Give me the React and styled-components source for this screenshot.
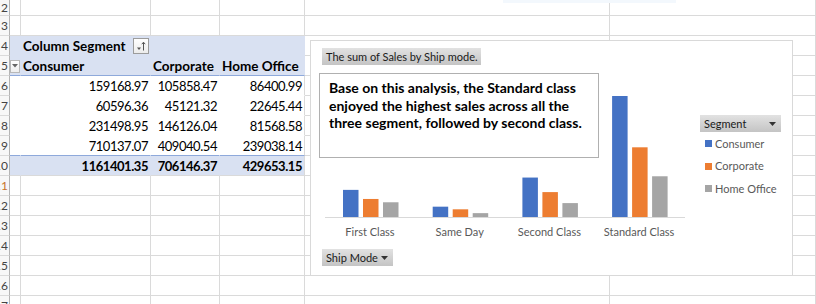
import React from 'react';
import styled, { createGlobalStyle } from 'styled-components';

const Global = createGlobalStyle`
  html, body { margin: 0; padding: 0; background: #fff; }
  body { font-family: Lato, "Liberation Sans", sans-serif; }
`;

const COLS = '10px 11px 130px 69px 85px 305px 1fr';
const GRID = '#dadada';
const PIVOT_BG = '#d9e1f2';
const PIVOT_LINE = '#8ea9db';

const Page = styled.div`
  position: relative;
  width: 816px;
  height: 304px;
  overflow: hidden;
  background: #fff;
`;

const Sheet = styled.div`
  display: flex;
  flex-direction: column;
`;

const Row = styled.div`
  display: grid;
  grid-template-columns: ${COLS};
  height: ${p => p.$h}px;
`;

const Cell = styled.div`
  box-sizing: border-box;
  border-right: 1px solid ${p => p.$vline || GRID};
  border-bottom: 1px solid ${p => p.$hline || GRID};
  background: ${p => p.$bg || '#fff'};
  display: flex;
  align-items: center;
  justify-content: ${p => (p.$right ? 'flex-end' : p.$between ? 'space-between' : 'flex-start')};
  padding: ${p => (p.$tight ? '0' : '0 2px')};
  font-family: Lato, "Liberation Sans", sans-serif;
  font-size: ${p => (p.$head ? '13.5px' : '13px')};
  letter-spacing: ${p => (p.$head ? '0' : '-0.45px')};
  font-weight: ${p => (p.$bold ? 700 : 400)};
  color: #000;
  white-space: nowrap;
  overflow: hidden;
  padding-top: 1px;
`;

const RowHead = styled.div`
  box-sizing: border-box;
  border-right: 1px solid #b4b4b4;
  border-bottom: 1px solid ${GRID};
  background: #f7f7f7;
  display: flex;
  align-items: center;
  justify-content: flex-end;
  padding-right: 1px;
  font-family: Lato, "Liberation Sans", sans-serif;
  font-size: 12px;
  color: ${p => (p.$active ? '#c8732a' : '#444')};
  overflow: hidden;
  white-space: nowrap;
`;

const FilterBtn = styled.div`
  box-sizing: border-box;
  width: 16px;
  height: 16px;
  margin-right: -1px;
  border: 1px solid #9c9c9c;
  background: linear-gradient(#ffffff, #ececec);
  display: flex;
  align-items: center;
  justify-content: center;
`;

const DropBtn = styled.div`
  box-sizing: border-box;
  width: 10px;
  height: 13px;
  border: 1px solid #b8b8b8;
  background: linear-gradient(#ffffff, #eeeeee);
  display: flex;
  align-items: center;
  justify-content: center;
`;

const TopStrip = styled.div`
  position: absolute;
  left: 503px;
  top: 0;
  width: 173px;
  height: 3px;
  background: #f3f8fd;
`;

const Chart = styled.div`
  position: absolute;
  left: 310px;
  top: 40px;
  width: 483px;
  height: 236px;
  box-sizing: border-box;
  border: 1px solid #d9d9d9;
  background: #fff;
  display: flex;
`;

const ChartMain = styled.div`
  position: relative;
  width: 379px;
  display: flex;
  flex-direction: column;
  padding-top: 7px;
`;

const FieldBtn = styled.div`
  box-sizing: border-box;
  align-self: flex-start;
  width: ${p => p.$w}px;
  height: 17px;
  margin-left: ${p => p.$ml || 0}px;
  margin-top: ${p => p.$mt || 0}px;
  padding: 0 5px 0 4px;
  background: linear-gradient(#e2e2e2, #c4c4c4);
  display: flex;
  align-items: center;
  justify-content: space-between;
  font-family: Lato, "Liberation Sans", sans-serif;
  font-size: 11px;
  color: #1a1a1a;
  white-space: nowrap;
`;

const NoteBox = styled.div`
  position: absolute;
  left: 8px;
  top: 32px;
  width: 280px;
  height: 85px;
  box-sizing: border-box;
  border: 1px solid #b0b0b0;
  background: #fff;
  padding: 5px 0 0 9px;
  font-family: Lato, "Liberation Sans", sans-serif;
  font-weight: 700;
  font-size: 14px;
  line-height: 17.5px;
  color: #000;
  white-space: nowrap;
`;

const PlotSvg = styled.svg`
  display: block;
`;

const Legend = styled.div`
  margin-left: 10px;
  padding-top: 74px;
  width: 81px;
  display: flex;
  flex-direction: column;
`;

const LegendItem = styled.div`
  height: 22.5px;
  display: flex;
  align-items: center;
  padding-left: 5px;
  font-family: Lato, "Liberation Sans", sans-serif;
  font-size: 11px;
  color: #595959;
`;

const Swatch = styled.span`
  width: 7px;
  height: 7px;
  background: ${p => p.$c};
  margin-right: 3px;
  margin-top: 1px;
`;

const Arrow = () => (
  <svg width="7" height="4" viewBox="0 0 7 4"><path d="M0 0 L7 0 L3.5 4 Z" fill="#333" /></svg>
);

const DATA = [
  { name: 'First Class', v: [159168.97, 105858.47, 86400.99] },
  { name: 'Same Day', v: [60596.36, 45121.32, 22645.44] },
  { name: 'Second Class', v: [231498.95, 146126.04, 81568.58] },
  { name: 'Standard Class', v: [710137.07, 409040.54, 239038.14] },
];
const TOTAL = ['1161401.35', '706146.37', '429653.15'];
const SERIES = [
  { name: 'Consumer', c: '#4472c4' },
  { name: 'Corporate', c: '#ed7d31' },
  { name: 'Home Office', c: '#a5a5a5' },
];

const fmt = n => n.toFixed(2);

function PlainCells() {
  return (
    <>
      <Cell /><Cell /><Cell /><Cell /><Cell /><Cell />
    </>
  );
}

function TailCells() {
  return (
    <>
      <Cell /><Cell />
    </>
  );
}

function Plot() {
  const ox = 311;
  const base = 152;
  const scale = 5869;
  return (
    <PlotSvg width="379" height="180" viewBox="0 0 379 180">
      {DATA.map((d, i) => {
        const c = 370 + i * 89.7 - ox;
        return (
          <g key={d.name}>
            {d.v.map((v, j) => {
              const h = v / scale;
              return (
                <rect key={j} x={c - 27 + j * 20} y={base - h} width="15.5" height={h} fill={SERIES[j].c} />
              );
            })}
            <text x={c} y="171" textAnchor="middle" fontFamily="Lato, 'Liberation Sans', sans-serif" fontSize="11" fill="#595959">
              {d.name}
            </text>
          </g>
        );
      })}
      <line x1="14" x2="374" y1={base + 0.5} y2={base + 0.5} stroke="#d9d9d9" strokeWidth="1" />
    </PlotSvg>
  );
}

export default function App() {
  const rows = [];
  for (let r = 2; r <= 17; r++) {
    const h = r === 2 ? 16 : 20;
    let cells;
    if (r === 4) {
      cells = (
        <>
          <Cell $bg={PIVOT_BG} $vline={PIVOT_BG} $hline={PIVOT_BG} />
          <Cell $bg={PIVOT_BG} $vline={PIVOT_BG} $hline={PIVOT_BG} $bold $head $between>
            <span>Column Segment</span>
            <FilterBtn>
              <svg width="10" height="10" viewBox="0 0 10 10">
                <path d="M1 6.5 L5 6.5 L3 9 Z" fill="#555" />
                <path d="M7.5 9.5 L7.5 1.5" stroke="#555" strokeWidth="1" />
                <path d="M5.8 3.2 L7.5 1.2 L9.2 3.2" stroke="#555" strokeWidth="1" fill="none" />
              </svg>
            </FilterBtn>
          </Cell>
          <Cell $bg={PIVOT_BG} $vline={PIVOT_BG} $hline={PIVOT_BG} />
          <Cell $bg={PIVOT_BG} $vline={PIVOT_BG} $hline={PIVOT_BG} />
          <TailCells />
        </>
      );
    } else if (r === 5) {
      cells = (
        <>
          <Cell $bg={PIVOT_BG} $vline={PIVOT_BG} $hline={PIVOT_LINE} $tight>
            <DropBtn>
              <svg width="6" height="4" viewBox="0 0 6 4"><path d="M0 0 L6 0 L3 3.5 Z" fill="#666" /></svg>
            </DropBtn>
          </Cell>
          <Cell $bg={PIVOT_BG} $vline={PIVOT_BG} $hline={PIVOT_LINE} $bold $head>Consumer</Cell>
          <Cell $bg={PIVOT_BG} $vline={PIVOT_BG} $hline={PIVOT_LINE} $bold $head>Corporate</Cell>
          <Cell $bg={PIVOT_BG} $vline={PIVOT_BG} $hline={PIVOT_LINE} $bold $head>Home Office</Cell>
          <TailCells />
        </>
      );
    } else if (r >= 6 && r <= 9) {
      const d = DATA[r - 6];
      const hl = r === 9 ? PIVOT_LINE : '#fff';
      cells = (
        <>
          <Cell $vline="#fff" $hline={hl} />
          <Cell $vline="#fff" $hline={hl} $right>{fmt(d.v[0])}</Cell>
          <Cell $vline="#fff" $hline={hl} $right>{fmt(d.v[1])}</Cell>
          <Cell $hline={hl} $right>{fmt(d.v[2])}</Cell>
          <TailCells />
        </>
      );
    } else if (r === 10) {
      cells = (
        <>
          <Cell $bg={PIVOT_BG} $vline={PIVOT_BG} />
          <Cell $bg={PIVOT_BG} $vline={PIVOT_BG} $bold $right>{TOTAL[0]}</Cell>
          <Cell $bg={PIVOT_BG} $vline={PIVOT_BG} $bold $right>{TOTAL[1]}</Cell>
          <Cell $bg={PIVOT_BG} $bold $right>{TOTAL[2]}</Cell>
          <TailCells />
        </>
      );
    } else {
      cells = <PlainCells />;
    }
    rows.push(
      <Row key={r} $h={h}>
        <RowHead $active={r === 11}>{r}</RowHead>
        {cells}
      </Row>
    );
  }

  return (
    <Page>
      <Global />
      <Sheet>{rows}</Sheet>
      <TopStrip />
      <Chart>
        <ChartMain>
          <FieldBtn $w={159} $ml={11}>The sum of Sales by Ship mode.</FieldBtn>
          <Plot />
          <FieldBtn $w={71} $ml={11} $mt={4}>
            <span>Ship Mode</span>
            <Arrow />
          </FieldBtn>
          <NoteBox>
            Base on this analysis, the Standard class<br />
            enjoyed the highest sales across all the<br />
            three segment, followed by second class.
          </NoteBox>
        </ChartMain>
        <Legend>
          <FieldBtn $w={81}>
            <span>Segment</span>
            <Arrow />
          </FieldBtn>
          {SERIES.map(s => (
            <LegendItem key={s.name}>
              <Swatch $c={s.c} />
              {s.name}
            </LegendItem>
          ))}
        </Legend>
      </Chart>
    </Page>
  );
}
